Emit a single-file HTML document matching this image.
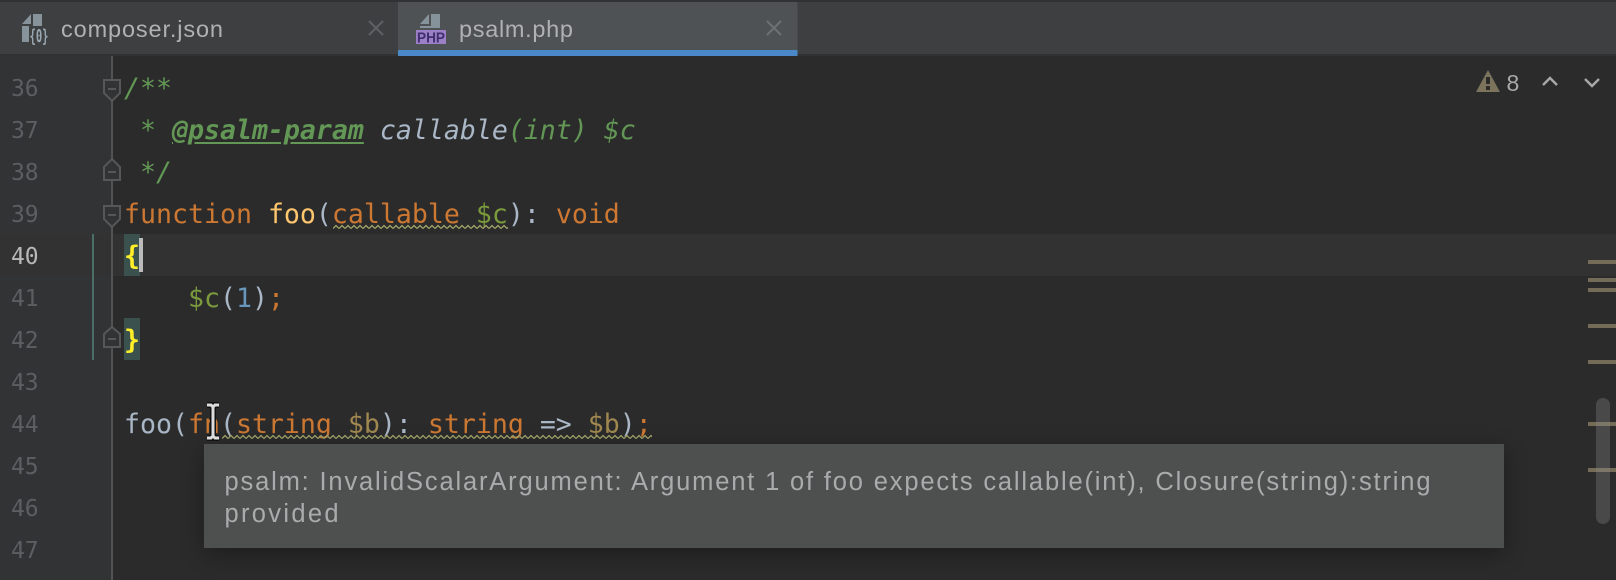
<!DOCTYPE html>
<html><head><meta charset="utf-8">
<style>
html,body{margin:0;padding:0;background:#2b2b2b;}
#p{position:relative;width:1616px;height:580px;overflow:hidden;background:#2b2b2b;}
.a{position:absolute;}
.l{position:absolute;left:124px;height:42px;margin-top:1.5px;line-height:42px;font-family:"DejaVu Sans Mono","Liberation Mono",monospace;font-size:26.57px;white-space:pre;color:#a9b7c6;}
.n{position:absolute;left:11px;height:42px;margin-top:2px;line-height:42px;font-family:"DejaVu Sans Mono","Liberation Mono",monospace;font-size:23px;letter-spacing:-.1px;color:#5c5f61;}
.k{color:#cc7832}.f{color:#ffc66d}.v{color:#7a9a3c}.b{color:#a08850}.g{color:#629755;font-style:italic}
svg{position:absolute;left:0;top:0;}
</style></head><body><div id="p">
<div class="a" style="left:0;top:0;width:112px;height:580px;background:#313335"></div>
<div class="a" style="left:0;top:234px;width:1616px;height:42px;background:#323232"></div>
<div class="a" style="left:92px;top:234px;width:2px;height:126px;background:#4b6f66"></div>
<div class="a" style="left:111px;top:56px;width:2px;height:524px;background:#515355"></div>
<div class="a" style="left:124px;top:234px;width:16px;height:42px;background:#3b514d"></div>
<div class="a" style="left:124px;top:318px;width:16px;height:42px;background:#3b514d"></div>

<div class="n" style="top:66px">36</div>
<div class="n" style="top:108px">37</div>
<div class="n" style="top:150px">38</div>
<div class="n" style="top:192px">39</div>
<div class="n" style="top:234px;color:#b8b8b8">40</div>
<div class="n" style="top:276px">41</div>
<div class="n" style="top:318px">42</div>
<div class="n" style="top:360px">43</div>
<div class="n" style="top:402px">44</div>
<div class="n" style="top:444px">45</div>
<div class="n" style="top:486px">46</div>
<div class="n" style="top:528px">47</div>

<div class="l g" style="top:66px">/**</div>
<div class="l g" style="top:108px"> * <span style="font-weight:bold;text-decoration:underline;text-underline-offset:3px">@psalm-param</span> <span style="color:#a9b7c6">callable</span>(int) $c</div>
<div class="l g" style="top:150px"> */</div>
<div class="l" style="top:192px"><span class="k">function</span> <span class="f">foo</span>(<span class="k">callable</span> <span class="v">$c</span>): <span class="k">void</span></div>
<div class="l" style="top:234px;color:#ffef28;font-weight:bold">{</div>
<div class="a" style="left:139px;top:238px;width:4px;height:34px;background:#bbbbbb"></div>
<div class="l" style="top:276px">    <span class="v">$c</span>(<span style="color:#6897bb">1</span>)<span class="k">;</span></div>
<div class="l" style="top:318px;color:#ffef28;font-weight:bold">}</div>
<div class="l" style="top:402px">foo(<span class="k">fn</span>(<span class="k">string</span> <span class="b">$b</span>): <span class="k">string</span> =&gt; <span class="b">$b</span>)<span class="k">;</span></div>

<svg width="1616" height="580" viewBox="0 0 1616 580">
  <defs>
    <pattern id="w1" x="333" y="224" width="6" height="6" patternUnits="userSpaceOnUse">
      <path d="M0 4.5 L3 1.5 L6 4.5" fill="none" stroke="#a3a56a" stroke-width="1.3"/>
    </pattern>
    <pattern id="w2" x="222" y="434" width="6" height="6" patternUnits="userSpaceOnUse">
      <path d="M0 4.5 L3 1.5 L6 4.5" fill="none" stroke="#a3a56a" stroke-width="1.3"/>
    </pattern>
  </defs>
  <!-- tab bar -->
  <rect x="0" y="0" width="1616" height="2" fill="#303234"/>
  <rect x="0" y="2" width="1616" height="52" fill="#3d3f41"/>
  <rect x="0" y="54" width="1616" height="2" fill="#323232"/>
  <rect x="398" y="2" width="399.5" height="48" fill="#4e5254"/>
  <rect x="398" y="50" width="399.5" height="6" fill="#4a88c7"/>

  <!-- composer icon -->
  <path d="M22 24 L31 14 L31 24 Z" fill="#87939b"/>
  <path d="M33 14 H42 V27 H33 Z M22 26 H33 V42 H22 Z" fill="#87939b"/>
  <rect x="29" y="26" width="21" height="19" fill="#3d3f41"/>
  <text x="29.5" y="42" font-family="'DejaVu Sans Mono',monospace" font-size="18" font-weight="bold" fill="#9aa7b0" textLength="19" lengthAdjust="spacingAndGlyphs">{0}</text>
  <text x="61" y="37" font-family="'Liberation Sans',sans-serif" font-size="23.5" fill="#afb1b3" textLength="162" lengthAdjust="spacing">composer.json</text>
  <path d="M369 21 L383 35 M383 21 L369 35" stroke="#5f6264" stroke-width="2" fill="none"/>

  <!-- php icon -->
  <path d="M420 28 V24 L429 14 V24 H420 Z" fill="#87939b"/>
  <path d="M431 14 H440 V28 H420 V26 H431 Z" fill="#87939b"/>
  <rect x="416" y="30" width="30" height="14" fill="#9b7fc7"/>
  <text x="417" y="42.5" font-family="'Liberation Sans',sans-serif" font-size="15" font-weight="bold" fill="#3f2f6d" textLength="28" lengthAdjust="spacingAndGlyphs">PHP</text>
  <text x="459" y="37" font-family="'Liberation Sans',sans-serif" font-size="23.5" fill="#afb1b3" textLength="114" lengthAdjust="spacing">psalm.php</text>
  <path d="M767 21 L781 35 M781 21 L767 35" stroke="#6d7173" stroke-width="2" fill="none"/>

  <!-- fold icons -->
  <g fill="#313335" stroke="#555759" stroke-width="2">
    <path d="M104 80 H120 V93 L112 101 L104 93 Z"/>
    <path d="M104 206 H120 V219 L112 227 L104 219 Z"/>
    <path d="M104 180 H120 V167 L112 159 L104 167 Z"/>
    <path d="M104 347 H120 V334 L112 327 L104 334 Z"/>
  </g>
  <g fill="none" stroke="#555759" stroke-width="2">
    <path d="M108 89 H116 M108 215 H116 M108 172 H116 M108 339 H116"/>
  </g>

  <!-- wavy -->
  <rect x="333" y="224" width="175" height="6" fill="url(#w1)"/>
  <rect x="222" y="434" width="430" height="6" fill="url(#w2)"/>

  <!-- top-right -->
  <path d="M1488 70 L1500 92 H1476 Z" fill="#7b735c"/>
  <rect x="1486" y="77" width="4" height="7" fill="#2b2b2b"/>
  <rect x="1486" y="86" width="4" height="4" fill="#2b2b2b"/>
  <text x="1506.5" y="91" font-family="'Liberation Sans',sans-serif" font-size="23" fill="#a9a9a9">8</text>
  <path d="M1543 85 L1550 78 L1557 85" fill="none" stroke="#a8a8a8" stroke-width="2.4"/>
  <path d="M1585 79 L1592 86 L1599 79" fill="none" stroke="#a8a8a8" stroke-width="2.4"/>

  <!-- error stripes -->
  <g fill="#756c58">
    <rect x="1588" y="260" width="28" height="4"/>
    <rect x="1588" y="278" width="28" height="4"/>
    <rect x="1588" y="288" width="28" height="4"/>
    <rect x="1588" y="324" width="28" height="4"/>
    <rect x="1588" y="360" width="28" height="4"/>
    <rect x="1588" y="422" width="28" height="4"/>
    <rect x="1588" y="468" width="28" height="4"/>
  </g>
  <rect x="1596" y="398" width="14" height="126" rx="7" fill="#8f8f8f" fill-opacity=".3"/>
</svg>

<div class="a" style="left:204px;top:444px;width:1300px;height:104px;background:#4e5050;box-shadow:0 6px 22px rgba(0,0,0,.32)"></div>

<svg width="1616" height="580" viewBox="0 0 1616 580">
  <text x="224.5" y="490" font-family="'Liberation Sans',sans-serif" font-size="25.5" fill="#a9acad" textLength="1206" lengthAdjust="spacing">psalm: InvalidScalarArgument: Argument 1 of foo expects callable(int), Closure(string):string</text>
  <text x="224.5" y="522" font-family="'Liberation Sans',sans-serif" font-size="25.5" fill="#a9acad" textLength="114" lengthAdjust="spacing">provided</text>
  <!-- I-beam cursor -->
  <path d="M207 405 H211 L213 407 L215 405 H219 M213 407 V436 M207 438 H211 L213 436 L215 438 H219" fill="none" stroke="#111" stroke-width="6"/>
  <path d="M207 405 H211 L213 407 L215 405 H219 M213 407 V436 M207 438 H211 L213 436 L215 438 H219" fill="none" stroke="#dcdcdc" stroke-width="3"/>
</svg>
</div></body></html>
